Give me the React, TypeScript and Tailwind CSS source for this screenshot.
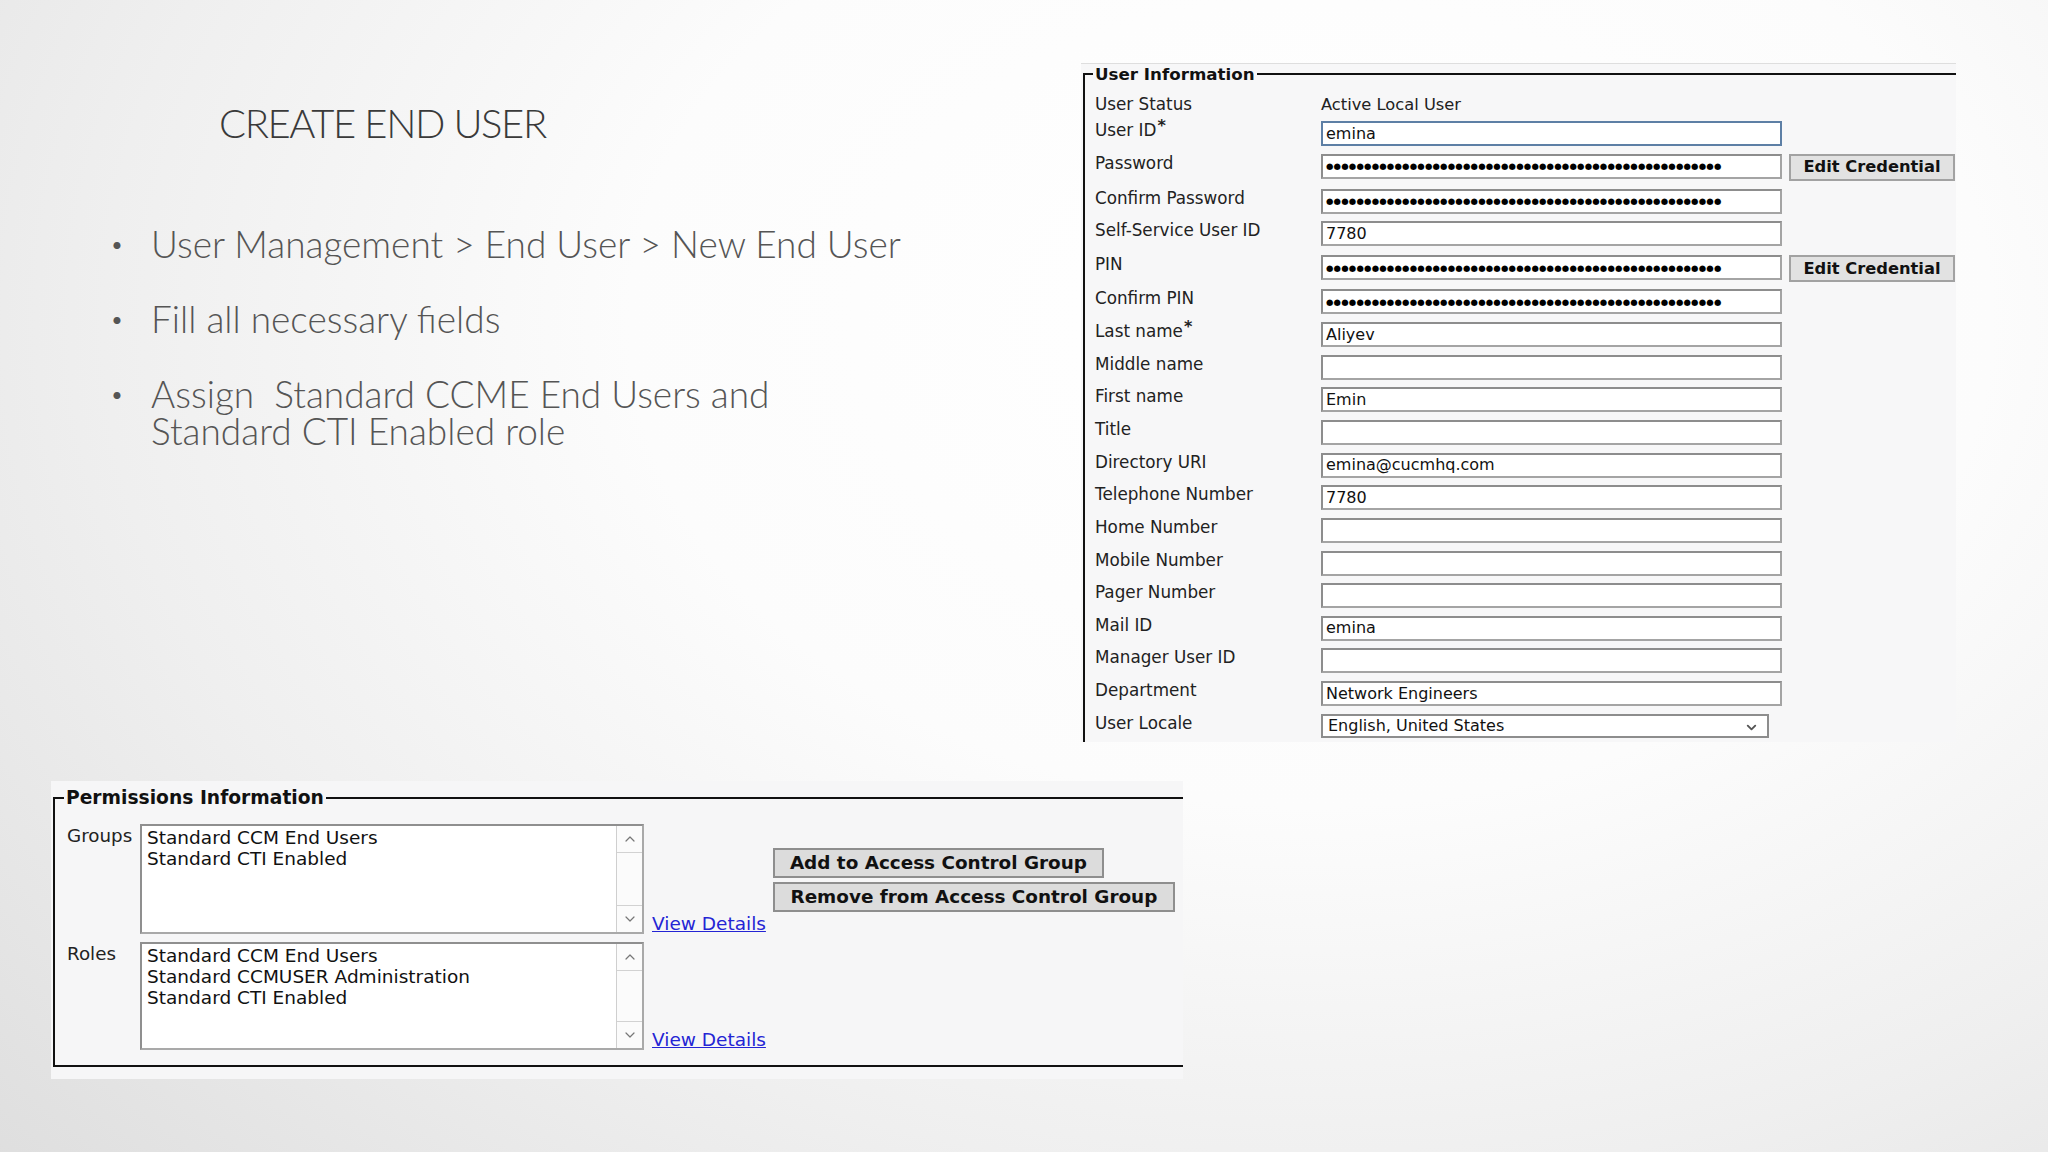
import React from 'react';
import { ChevronDown, ChevronUp } from 'lucide-react';

type Row = {
  label: string;
  value?: string;
  req?: boolean;
  pwd?: boolean;
  focus?: boolean;
  edit?: boolean;
  h: string;
};

const dots = '●'.repeat(52);

const rows: Row[] = [
  { label: 'User ID', value: 'emina', req: true, focus: true, h: 'h-[32.6px]' },
  { label: 'Password', pwd: true, edit: true, h: 'h-[35.2px]' },
  { label: 'Confirm Password', pwd: true, h: 'h-[32.7px]' },
  { label: 'Self-Service User ID', value: '7780', h: 'h-[34px]' },
  { label: 'PIN', pwd: true, edit: true, h: 'h-[33.9px]' },
  { label: 'Confirm PIN', pwd: true, h: 'h-[32.7px]' },
  { label: 'Last name', value: 'Aliyev', req: true, h: 'h-[32.65px]' },
  { label: 'Middle name', h: 'h-[32.65px]' },
  { label: 'First name', value: 'Emin', h: 'h-[32.65px]' },
  { label: 'Title', h: 'h-[32.65px]' },
  { label: 'Directory URI', value: 'emina@cucmhq.com', h: 'h-[32.65px]' },
  { label: 'Telephone Number', value: '7780', h: 'h-[32.65px]' },
  { label: 'Home Number', h: 'h-[32.65px]' },
  { label: 'Mobile Number', h: 'h-[32.65px]' },
  { label: 'Pager Number', h: 'h-[32.65px]' },
  { label: 'Mail ID', value: 'emina', h: 'h-[32.65px]' },
  { label: 'Manager User ID', h: 'h-[32.65px]' },
  { label: 'Department', value: 'Network Engineers', h: 'h-[32.65px]' },
];

const ui = "font-['DejaVu_Sans','Liberation_Sans',sans-serif]";

const Field: React.FC<{ row: Row }> = ({ row }) => (
  <div className={`flex items-start ${row.h}`}>
    <div className="w-[226px] shrink-0 text-[16.8px] leading-[19px] text-[#222]">
      {row.label}
      {row.req && <span className="relative -top-[5px] text-[16px] font-bold ml-[1px]">*</span>}
    </div>
    <div
      className={`w-[461px] h-[25px] bg-white border-2 flex items-center pl-[3px] text-[16px] text-[#111] overflow-hidden whitespace-nowrap ${
        row.focus ? 'border-[#5d7fa5]' : 'border-[#a4a4a4] border-t-[#8d8d8d] border-l-[#8d8d8d]'
      }`}
    >
      {row.pwd ? (
        <span className="text-[8.5px] leading-none tracking-[0.19px] text-black">{dots}</span>
      ) : (
        row.value
      )}
    </div>
    {row.edit && (
      <button className="ml-[7px] w-[166px] h-[27px] bg-[#e2e2e2] border-2 border-[#a2a2a2] text-[16.3px] font-bold text-[#111] leading-none">
        Edit Credential
      </button>
    )}
  </div>
);

const UserInformation: React.FC = () => (
  <div className={`mt-[63px] w-[875px] h-[679px] bg-[#f7f7f8] border-t border-[#dedede] ${ui}`}>
    <fieldset className="ml-[2px] h-full border-t-2 border-l-2 border-[#111] pl-[10px]">
      <legend className="-ml-[2px] px-[2px] text-[16.7px] leading-[20px] font-bold text-[#111]">User Information</legend>
      <div className="pt-[11px]">
        <div className="flex items-start h-[26px]">
          <div className="w-[226px] shrink-0 text-[16.8px] leading-[19px] text-[#222]">User Status</div>
          <div className="text-[16.3px] leading-[19px] text-[#222]">Active Local User</div>
        </div>
        {rows.map((r) => (
          <Field key={r.label} row={r} />
        ))}
        <div className="flex items-start">
          <div className="w-[226px] shrink-0 text-[16.8px] leading-[19px] text-[#222]">User Locale</div>
          <div className="w-[448px] h-[24px] bg-white border-2 border-[#8d8d8d] flex items-center justify-between pl-[5px] pr-[8px] text-[16px] text-[#111]">
            <span>English, United States</span>
            <ChevronDown size={15} strokeWidth={3} className="text-[#555] mt-[3px]" />
          </div>
        </div>
      </div>
    </fieldset>
  </div>
);

const ListBox: React.FC<{ items: string[]; h: string }> = ({ items, h }) => (
  <div className={`w-[504px] ${h} bg-white border-2 border-[#8f8f8f] border-b-[#a9a9a9] border-r-[#a9a9a9] flex`}>
    <div className="flex-1 pl-[5px] pt-[1px] text-[18.5px] leading-[21px] text-[#111] whitespace-nowrap">
      {items.map((i) => (
        <div key={i}>{i}</div>
      ))}
    </div>
    <div className="w-[26px] flex flex-col border-l border-[#cfcfcf] bg-[#fbfbfb]">
      <div className="h-[27px] flex items-center justify-center border-b border-[#d2d2d2]">
        <ChevronUp size={16} strokeWidth={1.8} className="text-[#777]" />
      </div>
      <div className="flex-1" />
      <div className="h-[27px] flex items-center justify-center border-t border-[#d2d2d2]">
        <ChevronDown size={16} strokeWidth={1.8} className="text-[#777]" />
      </div>
    </div>
  </div>
);

const PermissionsInformation: React.FC = () => (
  <div className={`ml-[51px] mt-[39px] w-[1132px] h-[298px] bg-[#f6f6f7] pt-[6px] ${ui}`}>
    <fieldset className="ml-[2px] h-[280px] border-t-2 border-l-2 border-b-2 border-[#111] pl-[12px]">
      <legend className="-ml-[3px] px-[2px] text-[18.7px] leading-[22px] font-bold text-[#111]">
        Permissions Information
      </legend>
      <div className="flex items-start pt-[15px]">
        <div className="flex flex-col gap-[8px]">
          <div className="flex items-end">
            <div className="w-[73px] self-start mt-[1px] text-[18.3px] leading-[21px] text-[#222]">Groups</div>
            <ListBox h="h-[110px]" items={['Standard CCM End Users', 'Standard CTI Enabled']} />
            <a className="ml-[8px] text-[18.5px] leading-[21px] text-[#2424d4] underline">View Details</a>
          </div>
          <div className="flex items-end">
            <div className="w-[73px] self-start mt-[1px] text-[18.3px] leading-[21px] text-[#222]">Roles</div>
            <ListBox
              h="h-[108px]"
              items={['Standard CCM End Users', 'Standard CCMUSER Administration', 'Standard CTI Enabled']}
            />
            <a className="ml-[8px] text-[18.5px] leading-[21px] text-[#2424d4] underline">View Details</a>
          </div>
        </div>
        <div className="ml-[7px] mt-[24px] flex flex-col gap-[4px]">
          <button className="w-[331px] h-[30px] bg-[#dcdcdc] border-2 border-[#8e8e8e] text-[18.4px] font-bold text-[#111] leading-none">
            Add to Access Control Group
          </button>
          <button className="w-[402px] h-[30px] bg-[#dcdcdc] border-2 border-[#8e8e8e] text-[18.4px] font-bold text-[#111] leading-none">
            Remove from Access Control Group
          </button>
        </div>
      </div>
    </fieldset>
  </div>
);

const bullets = ['User Management > End User > New End User', 'Fill all necessary fields'];

export default function App() {
  return (
    <div className="w-[2048px] h-[1152px] overflow-hidden flex flex-col bg-[radial-gradient(ellipse_95%_120%_at_64%_28%,#ffffff_0%,#fcfcfc_35%,#efefef_62%,#d9d9d9_100%)]">
      <div className="flex items-start">
        <div className="w-[1081px] shrink-0 font-['Lato','Open_Sans',sans-serif]">
          <h1 className="pt-[102px] pl-[219px] text-[40px] leading-[42px] font-light text-[#3a3a3a] tracking-[-1.4px]">
            CREATE END USER
          </h1>
          <ul className="mt-[81px] pl-[110px] flex flex-col gap-[38px] text-[37px] leading-[37px] font-light text-[#555]">
            {bullets.map((b) => (
              <li key={b} className="flex">
                <span className="w-[41px] shrink-0 text-[24px]">•</span>
                <span>{b}</span>
              </li>
            ))}
            <li className="flex">
              <span className="w-[41px] shrink-0 text-[24px]">•</span>
              <span className="whitespace-pre">
                {'Assign  Standard CCME End Users and'}
                <br />
                {'Standard CTI Enabled role'}
              </span>
            </li>
          </ul>
        </div>
        <UserInformation />
      </div>
      <PermissionsInformation />
    </div>
  );
}
